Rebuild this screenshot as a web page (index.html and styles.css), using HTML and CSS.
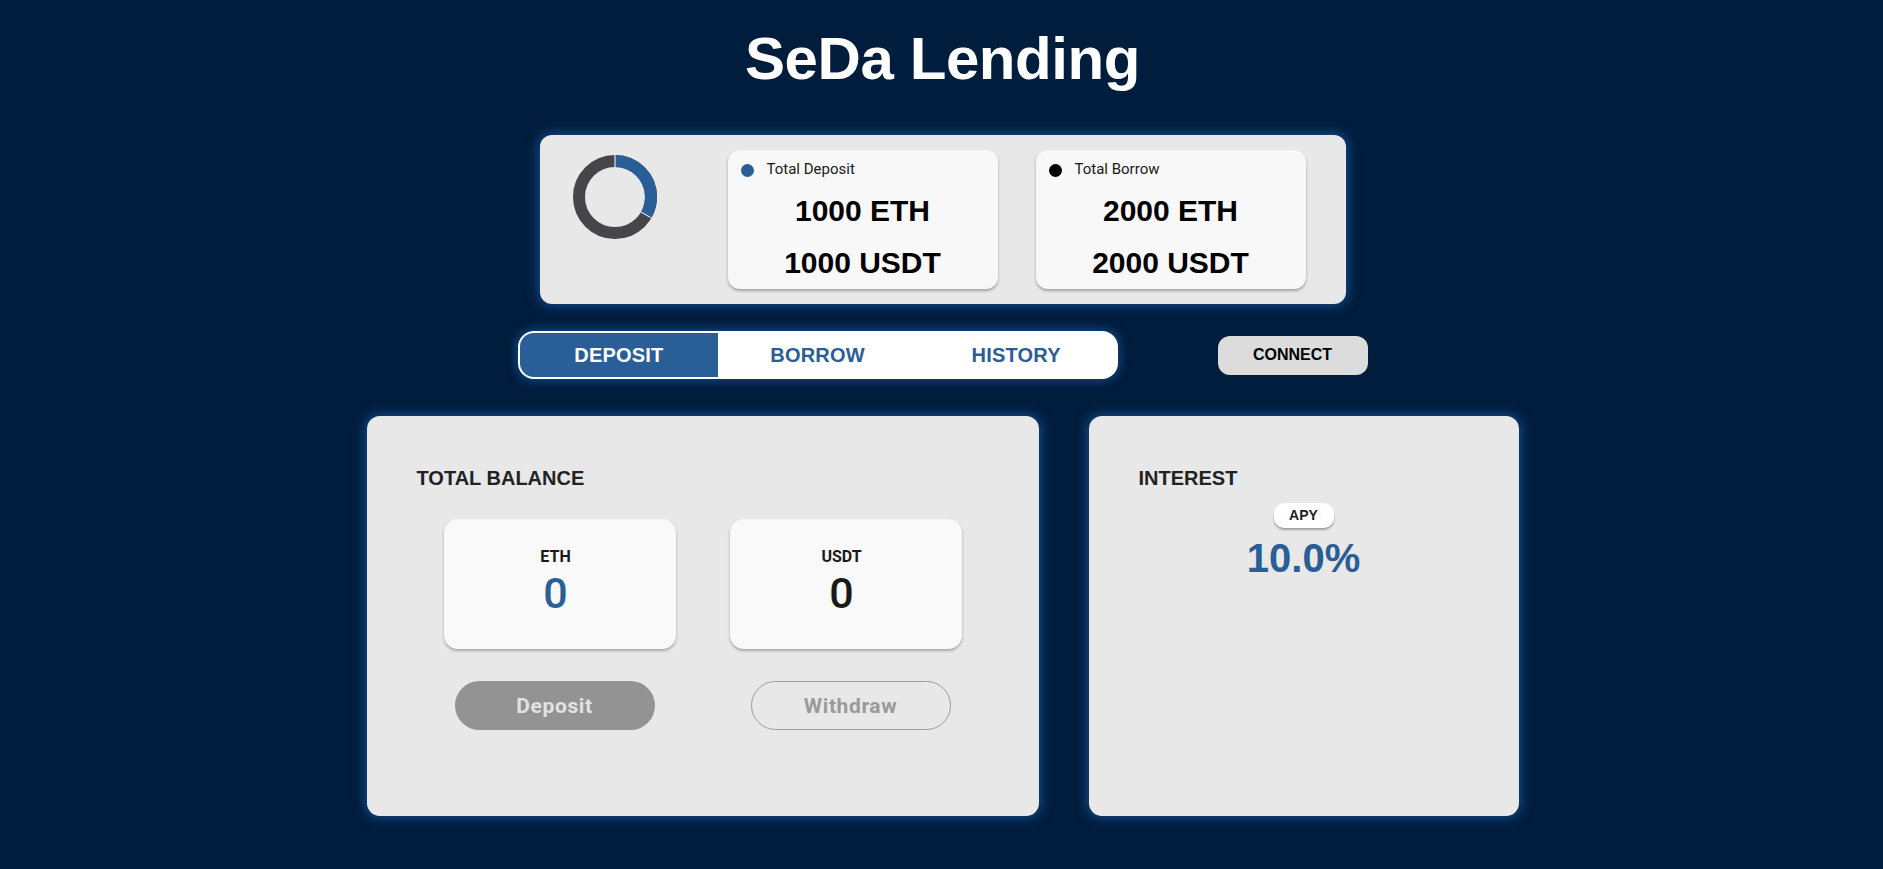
FILE: index.html
```html
<!DOCTYPE html>
<html lang="en">
<head>
<meta charset="utf-8">
<title>SeDa Lending</title>
<link rel="stylesheet" href="styles.css">
</head>
<body>
<main class="app">
  <h1 class="title">SeDa Lending</h1>

  <section class="summary">
    <svg class="donut" width="84" height="84" viewBox="0 0 84 84">
      <circle cx="42" cy="42" r="36" fill="none" stroke="#46454a" stroke-width="12"/>
      <circle cx="42" cy="42" r="36" fill="none" stroke="#2a5e96" stroke-width="12" stroke-dasharray="75.4 150.8" transform="rotate(-90 42 42)"/>
      <line x1="42" y1="0" x2="42" y2="12" stroke="#ffffff" stroke-width="1"/>
      <line x1="67.98" y1="57" x2="78.37" y2="63" stroke="#ffffff" stroke-width="1"/>
    </svg>
    <div class="stat">
      <div class="stat-label"><span class="dot dot-blue"></span>Total Deposit</div>
      <div class="stat-value first">1000 ETH</div>
      <div class="stat-value">1000 USDT</div>
    </div>
    <div class="stat">
      <div class="stat-label"><span class="dot dot-black"></span>Total Borrow</div>
      <div class="stat-value first">2000 ETH</div>
      <div class="stat-value">2000 USDT</div>
    </div>
  </section>

  <nav class="toolbar">
    <div class="tabs">
      <div class="tab active">DEPOSIT</div>
      <div class="tab">BORROW</div>
      <div class="tab">HISTORY</div>
    </div>
    <button class="connect">CONNECT</button>
  </nav>

  <section class="panels">
    <div class="panel panel-balance">
      <h2 class="panel-title">TOTAL BALANCE</h2>
      <div class="assets">
        <div class="asset">
          <div class="asset-name">ETH</div>
          <div class="asset-amount blue">0</div>
        </div>
        <div class="asset">
          <div class="asset-name">USDT</div>
          <div class="asset-amount">0</div>
        </div>
      </div>
      <div class="actions">
        <button class="btn btn-filled">Deposit</button>
        <button class="btn btn-outline">Withdraw</button>
      </div>
    </div>
    <div class="panel panel-interest">
      <h2 class="panel-title">INTEREST</h2>
      <div class="badge">APY</div>
      <div class="rate">10.0%</div>
    </div>
  </section>
</main>
</body>
</html>
```

FILE: styles.css
```css
* { box-sizing: border-box; }

html, body {
  margin: 0;
  padding: 0;
  background: #001d3d;
  font-family: "Liberation Sans", Arial, sans-serif;
  height: 869px;
  overflow: hidden;
}

.app {
  display: flex;
  flex-direction: column;
  align-items: center;
  padding-left: 2px;
}

.title {
  margin: 0;
  padding-top: 24px;
  font-size: 60px;
  line-height: 70px;
  font-weight: 700;
  color: #ffffff;
  letter-spacing: -0.4px;
}

.summary {
  margin-top: 41px;
  width: 806px;
  height: 169px;
  background: #e8e8e8;
  border-radius: 12px;
  box-shadow: 0 0 12px 2px rgba(30, 100, 180, 0.65);
  display: flex;
  align-items: flex-start;
  padding: 15px 40px 15px 33px;
}

.donut {
  margin-top: 5px;
  margin-right: 71px;
  flex: none;
}

.stat {
  width: 270px;
  height: 139px;
  background: #f8f8f8;
  border-radius: 12px;
  box-shadow: 0 2px 3px rgba(0, 0, 0, 0.3);
  padding: 9px 13px 0 13px;
}

.stat + .stat { margin-left: 38px; }

.stat-label {
  display: flex;
  align-items: center;
  font-family: Roboto, "Liberation Sans", sans-serif;
  font-size: 15px;
  line-height: 20px;
  color: #1a1a1a;
}

.dot {
  width: 13px;
  height: 13px;
  border-radius: 50%;
  margin-right: 13px;
  margin-top: 3px;
}

.dot-blue { background: #2a5e96; }
.dot-black { background: #000000; }

.stat-value {
  text-align: center;
  font-size: 30px;
  line-height: 52px;
  font-weight: 700;
  color: #000000;
}

.stat-value.first { margin-top: 6px; }

.toolbar {
  margin-top: 27px;
  display: flex;
  align-items: center;
  gap: 100px;
}

.tabs {
  width: 600px;
  height: 48px;
  display: flex;
  background: #ffffff;
  border: 2px solid #ffffff;
  border-radius: 16px;
  box-shadow: 0 0 10px 2px rgba(30, 100, 180, 0.6);
}

.tab {
  flex: 1;
  display: flex;
  align-items: center;
  justify-content: center;
  font-size: 20px;
  font-weight: 700;
  letter-spacing: 0.2px;
  color: #2a5e96;
}

.tab.active {
  background: #2a5e96;
  color: #ffffff;
  border-radius: 14px 0 0 14px;
}

.connect {
  width: 150px;
  height: 39px;
  border: none;
  border-radius: 12px;
  background: #dcdcdc;
  font-family: "Liberation Sans", Arial, sans-serif;
  font-size: 16px;
  font-weight: 700;
  color: #000000;
  padding: 0;
}

.panels {
  margin-top: 37px;
  display: flex;
  gap: 50px;
}

.panel {
  height: 400px;
  background: #e8e8e8;
  border-radius: 13px;
  box-shadow: 0 0 12px 2px rgba(30, 100, 180, 0.65);
  padding-top: 50px;
}

.panel-balance { width: 672px; }
.panel-interest {
  width: 430px;
  display: flex;
  flex-direction: column;
  align-items: center;
}

.panel-title {
  margin: 0;
  align-self: stretch;
  padding-left: 50px;
  font-size: 20px;
  line-height: 24px;
  font-weight: 700;
  color: #222222;
}

.assets {
  margin-top: 29px;
  display: flex;
  justify-content: center;
  gap: 54px;
}

.asset {
  width: 232px;
  height: 130px;
  background: #f9f9f9;
  border-radius: 14px;
  box-shadow: 0 2px 3px rgba(0, 0, 0, 0.28);
  padding: 29px 8px 0 0;
  text-align: center;
  font-family: Roboto, "Liberation Sans", sans-serif;
}

.asset-name {
  font-size: 16px;
  line-height: 18px;
  font-weight: 700;
  color: #1a1a1a;
}

.asset-amount {
  margin-top: 4px;
  font-size: 43px;
  line-height: 46px;
  font-weight: 500;
  color: #1a1a1a;
}

.asset-amount.blue { color: #2a5e96; }

.actions {
  margin-top: 32px;
  display: flex;
  justify-content: center;
  gap: 96px;
}

.btn {
  width: 200px;
  height: 49px;
  border-radius: 25px;
  font-family: Roboto, "Liberation Sans", sans-serif;
  font-size: 21px;
  font-weight: 700;
  letter-spacing: 0.6px;
  padding: 0;
}

.btn-filled {
  background: #939393;
  border: none;
  color: #e2e2e2;
}

.btn-outline {
  background: transparent;
  border: 1px solid #9c9c9c;
  color: #9a9a9a;
}

.badge {
  margin-top: 13px;
  width: 60px;
  height: 25px;
  border-radius: 10px;
  background: #ffffff;
  box-shadow: 0 2px 2px rgba(0, 0, 0, 0.3);
  font-size: 14px;
  line-height: 25px;
  font-weight: 700;
  text-align: center;
  color: #222222;
}

.rate {
  margin-top: 7px;
  font-size: 40px;
  line-height: 46px;
  font-weight: 700;
  color: #2a5e96;
}
```
